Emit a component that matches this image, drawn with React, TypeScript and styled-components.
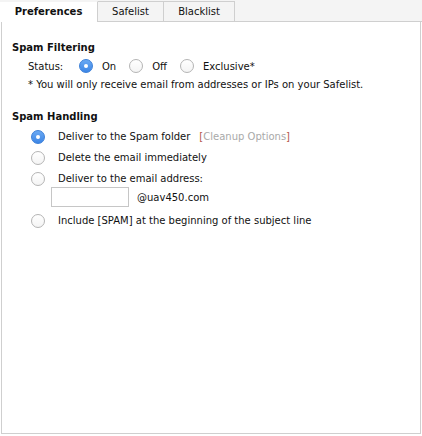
import styled, { createGlobalStyle } from 'styled-components';

const GlobalStyle = createGlobalStyle`
  html, body {
    margin: 0;
    padding: 0;
    background: #fff;
  }
  body {
    font-family: 'DejaVu Sans', Verdana, sans-serif;
    font-size: 10px;
    color: #111;
  }
`;

const Page = styled.div`
  width: 422px;
  height: 436px;
  display: flex;
  flex-direction: column;
`;

const TabBar = styled.div`
  display: flex;
  align-items: flex-end;
  height: 22px;
  box-sizing: border-box;
  padding-top: 1px;
  background: #f4f4f4;
  border-bottom: 1px solid #cfcfcf;
`;

const Tab = styled.div<{ active?: boolean; width: number }>`
  width: ${({ width }) => width}px;
  height: ${({ active }) => (active ? 21 : 20)}px;
  margin-bottom: ${({ active }) => (active ? -1 : 0)}px;
  box-sizing: border-box;
  display: flex;
  align-items: center;
  justify-content: center;
  font-weight: ${({ active }) => (active ? 'bold' : 'normal')};
  font-size: 10px;
  background: ${({ active }) => (active ? '#fff' : '#f4f4f4')};
  border-top: 1px solid ${({ active }) => (active ? '#f4f4f4' : '#cfcfcf')};
  border-right: 1px solid #cfcfcf;
  padding-bottom: 1px;
`;

const Panel = styled.div`
  flex: 1;
  margin: 0 1px 2px 1px;
  border: 1px solid #cfcfcf;
  border-top: none;
  padding: 19px 0 0 10px;
`;

const Heading = styled.div<{ after: number }>`
  font-weight: bold;
  line-height: 13px;
  margin-bottom: ${({ after }) => after}px;
`;

const Section = styled.div<{ top: number }>`
  margin-top: ${({ top }) => top}px;
`;

const StatusRow = styled.div`
  display: flex;
  align-items: center;
  height: 20px;
  padding-left: 16px;
`;

const StatusLabel = styled.span`
  width: 51px;
`;

const Option = styled.label<{ last?: boolean }>`
  display: flex;
  align-items: center;
  margin-right: ${({ last }) => (last ? 0 : 13)}px;
  span + span {
    margin-left: 9px;
  }
`;

const Radio = styled.span<{ checked?: boolean }>`
  width: 14px;
  height: 14px;
  box-sizing: border-box;
  border-radius: 50%;
  display: inline-flex;
  align-items: center;
  justify-content: center;
  flex-shrink: 0;
  background: ${({ checked }) =>
    checked ? 'linear-gradient(#6aa9f3, #3d86e6)' : 'linear-gradient(#fff, #f4f4f4)'};
  border: 1px solid ${({ checked }) => (checked ? '#3b7fd8' : '#b4b4b4')};
  &::after {
    content: '';
    display: ${({ checked }) => (checked ? 'block' : 'none')};
    width: 4px;
    height: 4px;
    border-radius: 50%;
    background: #fff;
  }
`;

const Note = styled.div`
  padding-left: 16px;
  line-height: 17px;
`;

const HandlingRow = styled.label<{ top?: number }>`
  display: flex;
  align-items: center;
  height: 21px;
  margin-top: ${({ top }) => top ?? 0}px;
  padding-left: 19px;
  ${Radio} {
    margin-right: 13px;
  }
`;

const AddressRow = styled.div`
  display: flex;
  align-items: center;
  height: 20px;
  margin-top: -2px;
  padding-left: 39px;
`;

const AddressInput = styled.input`
  width: 78px;
  height: 20px;
  box-sizing: border-box;
  border: 1px solid #c6c6c6;
  margin: 0 8px 0 0;
  padding: 0 3px;
  font: inherit;
`;

const Bracket = styled.span`
  color: #b5554a;
`;

const CleanupLink = styled.span`
  color: #a9a9a9;
`;

const Spacer = styled.span`
  width: 9px;
`;

export default function App() {
  return (
    <Page>
      <GlobalStyle />
      <TabBar>
        <Tab active width={98}>Preferences</Tab>
        <Tab width={66}>Safelist</Tab>
        <Tab width={71}>Blacklist</Tab>
      </TabBar>
      <Panel>
        <Section top={0}>
          <Heading after={2}>Spam Filtering</Heading>
          <StatusRow>
            <StatusLabel>Status:</StatusLabel>
            <Option>
              <Radio checked />
              <span>On</span>
            </Option>
            <Option>
              <Radio />
              <span>Off</span>
            </Option>
            <Option last>
              <Radio />
              <span>Exclusive*</span>
            </Option>
          </StatusRow>
          <Note>* You will only receive email from addresses or IPs on your Safelist.</Note>
        </Section>
        <Section top={17}>
          <Heading after={3}>Spam Handling</Heading>
          <HandlingRow>
            <Radio checked />
            <span>Deliver to the Spam folder</span>
            <Spacer />
            <Bracket>[</Bracket>
            <CleanupLink>Cleanup Options</CleanupLink>
            <Bracket>]</Bracket>
          </HandlingRow>
          <HandlingRow>
            <Radio />
            <span>Delete the email immediately</span>
          </HandlingRow>
          <HandlingRow>
            <Radio />
            <span>Deliver to the email address:</span>
          </HandlingRow>
          <AddressRow>
            <AddressInput type="text" />
            <span>@uav450.com</span>
          </AddressRow>
          <HandlingRow top={3}>
            <Radio />
            <span>Include [SPAM] at the beginning of the subject line</span>
          </HandlingRow>
        </Section>
      </Panel>
    </Page>
  );
}
